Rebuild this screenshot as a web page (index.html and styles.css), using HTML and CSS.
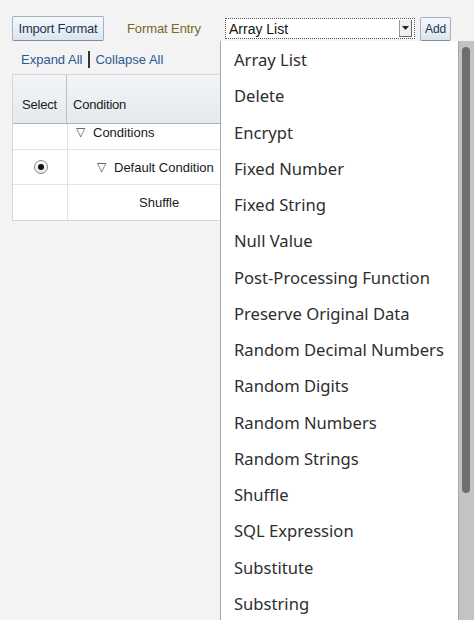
FILE: index.html
```html
<!DOCTYPE html>
<html>
<head>
<meta charset="utf-8">
<link rel="stylesheet" href="styles.css">
</head>
<body>
<div class="page">
  <div class="toolbar">
    <button class="btn btn-import">Import Format</button>
    <span class="label">Format Entry</span>
    <div class="select">
      <span class="select-text">Array List</span>
      <span class="select-arrow"><svg width="9" height="6" viewBox="0 0 9 6"><path d="M1 1h7L4.5 5z" fill="#222"/></svg></span>
    </div>
    <button class="btn btn-add">Add</button>
  </div>
  <div class="links">
    <a class="link">Expand All</a><span class="sep"></span><a class="link">Collapse All</a>
  </div>
  <div class="table">
    <div class="thead">
      <div class="th th-select">Select</div>
      <div class="th th-cond">Condition</div>
    </div>
    <div class="tr tr-1">
      <div class="td td-select"></div>
      <div class="td td-cond lvl1"><span class="tri">▽</span>Conditions</div>
    </div>
    <div class="tr tr-2">
      <div class="td td-select"><span class="radio"><span class="dot"></span></span></div>
      <div class="td td-cond lvl2"><span class="tri">▽</span>Default Condition</div>
    </div>
    <div class="tr tr-3">
      <div class="td td-select"></div>
      <div class="td td-cond lvl3">Shuffle</div>
    </div>
  </div>

  <div class="dropdown">
    <ul class="options">
      <li>Array List</li>
      <li>Delete</li>
      <li>Encrypt</li>
      <li>Fixed Number</li>
      <li>Fixed String</li>
      <li>Null Value</li>
      <li>Post-Processing Function</li>
      <li>Preserve Original Data</li>
      <li>Random Decimal Numbers</li>
      <li>Random Digits</li>
      <li>Random Numbers</li>
      <li>Random Strings</li>
      <li>Shuffle</li>
      <li>SQL Expression</li>
      <li>Substitute</li>
      <li>Substring</li>
    </ul>
    <div class="scrollbar"><div class="thumb"></div></div>
  </div>
</div>
</body>
</html>
```
FILE: styles.css
```css
html, body {
  margin: 0;
  padding: 0;
}
body {
  background: #f3f3f3;
  font-family: "Liberation Sans", Arial, sans-serif;
  width: 474px;
  height: 620px;
  overflow: hidden;
}
.page {
  position: relative;
  width: 474px;
  height: 620px;
  padding: 16px 0 0 12px;
  box-sizing: border-box;
}
.toolbar {
  display: flex;
  align-items: center;
  height: 25px;
}
.btn {
  font-family: "Liberation Sans", Arial, sans-serif;
  font-size: 13px;
  color: #1e3650;
  background: linear-gradient(#f6f9fc, #dbe5ef);
  border: 1px solid #a4b1bf;
  border-bottom-color: #7f8d9c;
  border-radius: 2px;
  height: 25px;
  padding: 0;
  margin: 0;
  letter-spacing: -0.2px;
}
.btn-import {
  width: 92px;
}
.label {
  margin-left: 23px;
  font-size: 13px;
  color: #7d6528;
  width: 98px;
  letter-spacing: -0.1px;
}
.select {
  display: flex;
  align-items: center;
  width: 190px;
  height: 21px;
  box-sizing: border-box;
  border: 1px dotted #555;
  background: #fff;
}
.select-text {
  flex: 1;
  font-size: 14px;
  color: #111;
  padding-left: 3px;
}
.select-arrow {
  width: 13px;
  height: 17px;
  margin-right: 2px;
  border-left: 1px solid #999;
  border-right: 1px solid #666;
  border-bottom: 1px solid #666;
  background: #f0f0f0;
  display: flex;
  align-items: center;
  justify-content: center;
  box-sizing: border-box;
}
.btn-add {
  margin-left: 5px;
  width: 31px;
  height: 24px;
  font-size: 12px;
}
.links {
  display: flex;
  align-items: center;
  margin-top: 9px;
  padding-left: 9px;
  height: 18px;
  font-size: 13px;
}
.link {
  color: #2a5b8e;
}
.sep {
  width: 2px;
  height: 17px;
  background: #333;
  margin: 0 5px 0 6px;
}
.table {
  margin-top: 6px;
  width: 220px;
  background: #fff;
  border: 1px solid #d6d6d6;
  border-right: none;
  font-size: 13px;
  color: #1a1a1a;
}
.thead {
  display: flex;
  height: 48px;
  background: linear-gradient(#f2f4f7, #e5e9ee);
  border-bottom: 1px solid #aab3bd;
}
.th {
  display: flex;
  align-items: flex-end;
  padding-bottom: 11px;
  box-sizing: border-box;
  letter-spacing: -0.2px;
}
.th-select {
  width: 54px;
  justify-content: center;
  border-right: 1px solid #b9c0c8;
}
.th-cond {
  flex: 1;
  padding-left: 6px;
}
.tr {
  display: flex;
  border-bottom: 1px solid #e3e3e3;
}
.tr-1 { height: 25px; }
.tr-2 { height: 34px; }
.tr-3 { height: 35px; border-bottom: none; }
.td {
  display: flex;
  align-items: center;
}
.td-select {
  width: 54px;
  justify-content: center;
  border-right: 1px solid #e3e3e3;
}
.td-cond {
  flex: 1;
}
.tr-1 .td-cond { align-items: flex-start; padding-top: 1px; }
.lvl1 { padding-left: 8px; }
.lvl2 { padding-left: 29px; }
.lvl3 { padding-left: 71px; }
.tri {
  font-size: 12px;
  color: #444;
  margin-right: 8px;
}
.radio {
  width: 14px;
  height: 14px;
  border-radius: 50%;
  border: 1px solid #888;
  background: linear-gradient(#fff, #e6e6e6);
  display: flex;
  align-items: center;
  justify-content: center;
  box-sizing: border-box;
  margin-left: 1px;
}
.dot {
  width: 6px;
  height: 6px;
  border-radius: 50%;
  background: #111;
}
.dropdown {
  position: absolute;
  left: 220px;
  top: 41px;
  width: 254px;
  height: 579px;
  display: flex;
  background: #fff;
  border-left: 1px solid #a8a8a8;
  box-sizing: border-box;
}
.options {
  list-style: none;
  margin: 0;
  padding: 1px 0 0 0;
  flex: 1;
  font-family: "Noto Sans", "DejaVu Sans", sans-serif;
  font-size: 16.6px;
  color: #2e2e2e;
}
.options li {
  height: 36.27px;
  line-height: 36.27px;
  padding-left: 13px;
  white-space: nowrap;
}
.scrollbar {
  width: 16px;
  background: #c3c3c3;
  border-left: 1px solid #a9a9a9;
  box-sizing: border-box;
  padding: 6px 0 0 3px;
}
.thumb {
  width: 8px;
  height: 446px;
  background: #6e6e6e;
  border-radius: 4px;
}
```
